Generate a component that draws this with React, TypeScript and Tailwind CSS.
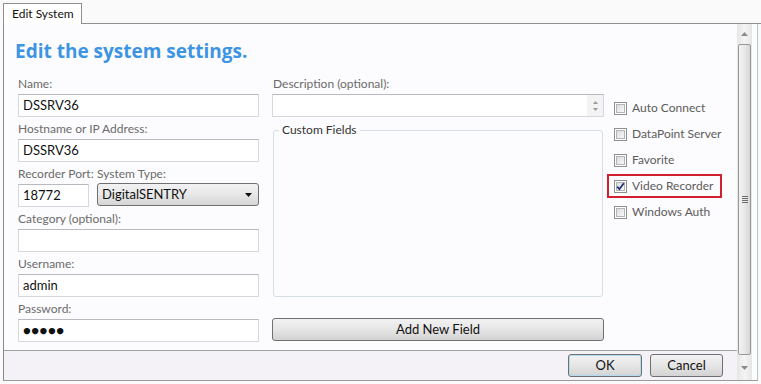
import React from 'react';

// Win7-style "Edit System" tab page

const font = { fontFamily: 'Lato, "Open Sans", sans-serif' };

function Label({ children, className = '' }: { children: React.ReactNode; className?: string }) {
  return <div className={`h-[16px] text-[12px] leading-[16px] text-[#6b6b6b] ${className}`}>{children}</div>;
}

function TextBox({ value, className = '' }: { value?: string; className?: string }) {
  return (
    <div
      className={`h-[23px] border border-[#d6d8dd] border-t-[#b8bac0] bg-white px-[4px] text-[13px] leading-[21px] text-[#111] ${className}`}
    >
      {value}
    </div>
  );
}

function CheckBox({ label, checked = false }: { label: string; checked?: boolean }) {
  return (
    <div className="flex h-[26px] items-center gap-[5px]">
      <div className="flex h-[13px] w-[13px] items-center justify-center border border-[#8e8f8f] bg-white">
        <div className="relative h-[9px] w-[9px] border border-[#b2b4b8] bg-gradient-to-br from-[#dcdcdc] to-[#f8f8f8]">
          {checked && (
            <svg viewBox="0 0 9 9" className="absolute -left-[1px] -top-[1px] h-[9px] w-[9px]">
              <path d="M1.2 4.6 L3.4 7.2 L7.8 1.2" fill="none" stroke="#1c2b6b" strokeWidth="1.7" />
            </svg>
          )}
        </div>
      </div>
      <span className="text-[12px] text-[#5c5c5c]">{label}</span>
    </div>
  );
}

function WinButton({ children, className = '' }: { children: React.ReactNode; className?: string }) {
  return (
    <div
      className={`flex items-center justify-center rounded-[3px] border border-[#707070] bg-gradient-to-b from-[#f2f2f2] via-[#e6e6e6] to-[#d3d3d3] text-[13px] text-[#111] ${className}`}
    >
      {children}
    </div>
  );
}

function ScrollBar() {
  return (
    <div className="flex w-[15px] flex-col bg-gradient-to-r from-[#e6e6e6] via-[#f4f4f4] to-[#e6e6e6]">
      <div className="flex h-[20px] items-center justify-center">
        <svg viewBox="0 0 7 4" className="h-[4px] w-[7px]">
          <path d="M0 4 L3.5 0 L7 4 Z" fill="#8a8a8a" />
        </svg>
      </div>
      <div className="mx-[1px] flex flex-1 items-center justify-center rounded-[2px] border border-[#979797] bg-gradient-to-r from-[#f3f3f3] via-[#e8e8e8] to-[#d6d6d6]">
        <div className="flex flex-col gap-[1px]">
          <div className="h-[1px] w-[6px] bg-[#6e6e6e]" />
          <div className="h-[1px] w-[6px] bg-[#6e6e6e]" />
          <div className="h-[1px] w-[6px] bg-[#6e6e6e]" />
          <div className="h-[1px] w-[6px] bg-[#6e6e6e]" />
        </div>
      </div>
      <div className="flex h-[25px] items-center justify-center">
        <svg viewBox="0 0 7 4" className="h-[4px] w-[7px]">
          <path d="M0 0 L3.5 4 L7 0 Z" fill="#8a8a8a" />
        </svg>
      </div>
    </div>
  );
}

export default function App() {
  return (
    <div className="flex h-[384px] w-[761px] flex-col bg-[#fafafa]" style={font}>
      {/* tab strip */}
      <div className="flex h-[24px] items-end pl-[3px] pt-[3px]">
        <div className="flex h-[21px] w-[79px] items-center border border-b-0 border-[#8e8f8f] bg-white pl-[8px] text-[12px] text-[#111]">
          Edit System
        </div>
        <div className="flex-1 border-b border-[#8e8f8f]" />
      </div>

      <div className="ml-[3px] mr-[3px] flex h-[357px] border-b border-l border-r border-l-[#8a8a8a] border-b-[#9a9a9a] border-r-[#b5c4d6] bg-[#fcfbfd]">
        <div className="flex flex-1 flex-col">
          <div className="flex-1 pl-[14px] pt-[15px]">
            <div
              className="-ml-[3px] text-[19px] font-bold leading-[24px] text-[#3c95e2]"
              style={{ fontFamily: '"Open Sans", Lato, sans-serif' }}
            >
              Edit the system settings.
            </div>

            <div className="mt-[13px] flex">
              {/* left column */}
              <div className="w-[241px]">
                <Label>Name:</Label>
                <TextBox value="DSSRV36" className="mt-[2px]" />
                <Label className="mt-[4px]">Hostname or IP Address:</Label>
                <TextBox value="DSSRV36" className="mt-[2px]" />
                <div className="mt-[4px] flex">
                  <div className="w-[79px]">
                    <Label>Recorder Port:</Label>
                    <TextBox value="18772" className="mt-[2px] w-[71px]" />
                  </div>
                  <div className="flex-1">
                    <Label>System Type:</Label>
                    <div className="mt-[1px] flex h-[23px] items-center justify-between rounded-[3px] border border-[#707070] bg-gradient-to-b from-[#f2f2f2] via-[#e8e8e8] to-[#d5d5d5] pl-[4px] pr-[6px] text-[13px] text-[#111]">
                      <span>DigitalSENTRY</span>
                      <svg viewBox="0 0 7 4" className="h-[4px] w-[7px]">
                        <path d="M0 0 L3.5 4 L7 0 Z" fill="#111" />
                      </svg>
                    </div>
                  </div>
                </div>
                <Label className="mt-[4px]">Category (optional):</Label>
                <TextBox className="mt-[2px]" />
                <Label className="mt-[4px]">Username:</Label>
                <TextBox value="admin" className="mt-[2px]" />
                <Label className="mt-[4px]">Password:</Label>
                <TextBox value="●●●●●" className="mt-[2px] text-[11px] tracking-[0.5px]" />
              </div>

              {/* middle column */}
              <div className="ml-[13px] w-[332px]">
                <Label className="pl-[1px]">Description (optional):</Label>
                <div className="mt-[2px] flex h-[23px] justify-end border border-[#d6d8dd] border-t-[#b8bac0] bg-white">
                  <div className="flex w-[16px] flex-col items-center justify-center gap-[4px] bg-[#f3f3f3]">
                    <svg viewBox="0 0 5 3" className="h-[3px] w-[5px]">
                      <path d="M0 3 L2.5 0 L5 3 Z" fill="#9a9a9a" />
                    </svg>
                    <svg viewBox="0 0 5 3" className="h-[3px] w-[5px]">
                      <path d="M0 0 L2.5 3 L5 0 Z" fill="#9a9a9a" />
                    </svg>
                  </div>
                </div>
                <div className="relative ml-[1px] mr-[1px] mt-[13px] h-[167px] rounded-[3px] border border-[#d5dfe5]">
                  <span className="absolute -top-[9px] left-[5px] bg-[#fcfbfd] px-[3px] text-[12px] leading-[16px] text-[#333]">
                    Custom Fields
                  </span>
                </div>
                <WinButton className="mt-[21px] h-[23px]">Add New Field</WinButton>
              </div>

              {/* right column */}
              <div className="ml-[10px] pt-[19px]">
                <CheckBox label="Auto Connect" />
                <CheckBox label="DataPoint Server" />
                <CheckBox label="Favorite" />
                <div className="relative">
                  <CheckBox label="Video Recorder" checked />
                  <div className="pointer-events-none absolute -left-[7px] top-[1px] h-[24px] w-[115px] border-2 border-[#d0202e]" />
                </div>
                <CheckBox label="Windows Auth" />
              </div>
            </div>
          </div>

          {/* footer */}
          <div className="flex h-[30px] items-center justify-end gap-[8px] border-t border-[#a0a0a0] bg-[#f4f2f6] pr-[14px]">
            <WinButton className="h-[23px] w-[74px] border-[#3c7fb1] shadow-[inset_0_0_0_1px_#b0dcf2]">OK</WinButton>
            <WinButton className="h-[23px] w-[73px]">Cancel</WinButton>
          </div>
        </div>
        <ScrollBar />
        <div className="w-[5px] bg-white" />
      </div>
    </div>
  );
}
